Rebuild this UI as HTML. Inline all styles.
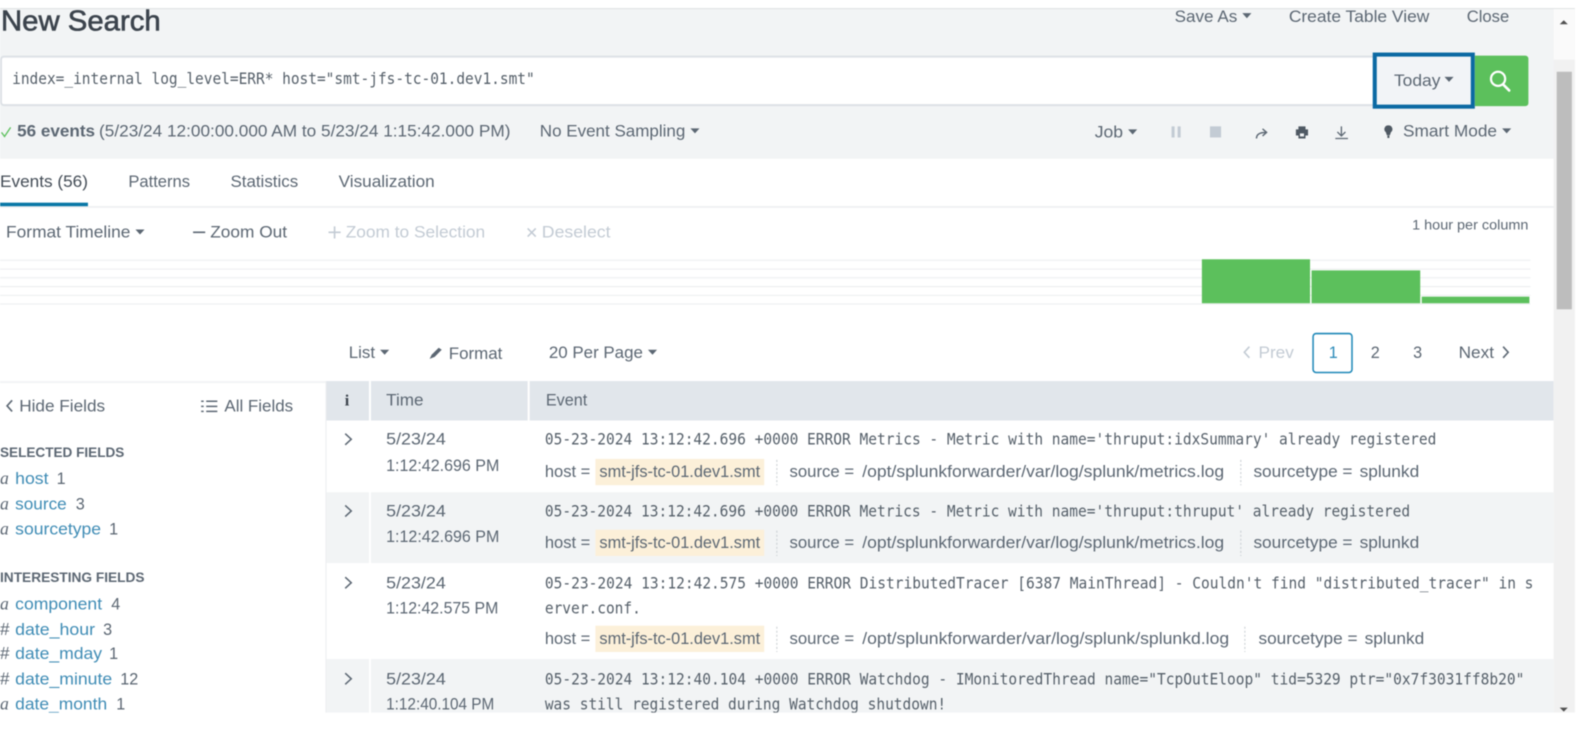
<!DOCTYPE html>
<html><head><meta charset="utf-8"><title>New Search</title>
<style>
html,body{margin:0;padding:0;background:#fff;width:1585px;height:748px;overflow:hidden}
svg{display:block;filter:blur(.5px)}
text{font-family:"Liberation Sans",sans-serif;font-size:16px;fill:#5c6773;white-space:pre}
.m{font-family:"DejaVu Sans Mono","Liberation Mono",monospace;font-size:15.4px;fill:#56606a}
.d{fill:#c3cbd4}
.l{fill:#3f8cb5}
.h{font-size:14px;font-weight:bold;fill:#5c6773}
.a{font-family:"Liberation Serif",serif;font-style:italic;font-size:17.500px;fill:#5c6773}
.n{font-size:17px}
</style></head><body>
<svg width="1585" height="748" viewBox="0 0 1568 740" preserveAspectRatio="none" xmlns="http://www.w3.org/2000/svg">
<rect width="1568" height="740" fill="#fff"/>
<!-- header -->
<rect x="0" y="8" width="1538" height="149" fill="#f2f4f5"/>
<rect x="0" y="8" width="1558" height="1" fill="#dfe1e3"/>
<text x="1" y="30" textLength="158" lengthAdjust="spacingAndGlyphs" style="font-size:28px;fill:#3c444d;stroke:#3c444d;stroke-width:.6">New Search</text>
<text x="1162" y="22" textLength="62" lengthAdjust="spacingAndGlyphs">Save As</text>
<path d="M1229 13h9l-4.500 5z" fill="#5c6773"/>
<text x="1275" y="22" textLength="139" lengthAdjust="spacingAndGlyphs">Create Table View</text>
<text x="1451" y="22" textLength="42" lengthAdjust="spacingAndGlyphs">Close</text>
<!-- search -->
<rect x="1" y="56" width="1360" height="48" rx="3" fill="#fff" stroke="#dde1e6" stroke-width="2"/>
<text class="m" x="12" y="83" textLength="517" lengthAdjust="spacingAndGlyphs">index=_internal log_level=ERR* host="smt-jfs-tc-01.dev1.smt"</text>
<rect x="1360" y="54" width="97" height="51.500" fill="#f2f4f7" stroke="#0b69a3" stroke-width="4"/>
<text x="1379" y="85" textLength="46" lengthAdjust="spacingAndGlyphs">Today</text>
<path d="M1429 76h9l-4.500 5z" fill="#5c6773"/>
<path d="M1459 55h50a3 3 0 0 1 3 3v44a3 3 0 0 1-3 3h-50z" fill="#5cc05c"/>
<circle cx="1482" cy="78" r="7" fill="none" stroke="#fff" stroke-width="2.200"/>
<path d="M1487 83.500l6 6" stroke="#fff" stroke-width="2.600" stroke-linecap="round"/>
<!-- status -->
<path d="M1.500 131l3 4 6-9" fill="none" stroke="#5cc05c" stroke-width="1.300"/>
<text x="17" y="135" textLength="77" lengthAdjust="spacingAndGlyphs" style="font-weight:bold">56 events</text>
<text x="98" y="135" textLength="407" lengthAdjust="spacingAndGlyphs">(5/23/24 12:00:00.000 AM to 5/23/24 1:15:42.000 PM)</text>
<text x="534" y="135" textLength="144" lengthAdjust="spacingAndGlyphs">No Event Sampling</text>
<path d="M683 127h9l-4.500 5z" fill="#5c6773"/>
<text x="1083" y="136" textLength="28" lengthAdjust="spacingAndGlyphs">Job</text>
<path d="M1116 128h9l-4.500 5z" fill="#5c6773"/>
<path d="M1159 125h3v11h-3zM1165 125h3v11h-3z" fill="#c3cbd4"/>
<rect x="1197" y="125" width="11" height="11" fill="#c3cbd4"/>
<path d="M1243 137c0-4 3-6 9-6M1249 127.500l4 3.500-4 3.500" fill="none" stroke="#5c6773" stroke-width="1.400"/>
<path d="M1284.500 125h7v3h2.500v6h-2.500v3h-7v-3h-2.500v-6h2.500z" fill="#4f5963"/>
<rect x="1286" y="132" width="4" height="3" fill="#f2f4f5"/>
<path d="M1327 125v9M1323 130.500l4 4 4-4M1321 137h12.500" fill="none" stroke="#5c6773" stroke-width="1.300"/>
<path d="M1373.500 124a3.800 3.800 0 0 1 2.500 6.800l-1 3h-3l-1-3a3.800 3.800 0 0 1 2.500-6.800z M1372.500 134h2v2.500h-2z" fill="#4f5963"/>
<text x="1388" y="135" textLength="93" lengthAdjust="spacingAndGlyphs">Smart Mode</text>
<path d="M1486 127h9l-4.500 5z" fill="#5c6773"/>
<!-- tabs -->
<text x="0" y="185" textLength="87" lengthAdjust="spacingAndGlyphs" style="fill:#444d57">Events (56)</text>
<text x="127" y="185" textLength="61" lengthAdjust="spacingAndGlyphs">Patterns</text>
<text x="228" y="185" textLength="67" lengthAdjust="spacingAndGlyphs">Statistics</text>
<text x="335" y="185" textLength="95" lengthAdjust="spacingAndGlyphs">Visualization</text>
<rect x="0" y="204" width="1538" height="1.500" fill="#eceef0"/>
<rect x="0" y="200.500" width="87" height="3.500" fill="#0877a6"/>
<!-- timeline controls -->
<text x="6" y="235" textLength="123" lengthAdjust="spacingAndGlyphs">Format Timeline</text>
<path d="M134 227h9l-4.500 5z" fill="#5c6773"/>
<rect x="191" y="229" width="12" height="1.600" fill="#5c6773"/>
<text x="208" y="235" textLength="76" lengthAdjust="spacingAndGlyphs">Zoom Out</text>
<path d="M325 229.800h12M331 224v12" stroke="#c3cbd4" stroke-width="1.600"/>
<text class="d" x="342" y="235" textLength="138" lengthAdjust="spacingAndGlyphs">Zoom to Selection</text>
<path d="M522 226l8 8M530 226l-8 8" stroke="#c3cbd4" stroke-width="1.500"/>
<text class="d" x="536" y="235" textLength="68" lengthAdjust="spacingAndGlyphs">Deselect</text>
<text x="1397" y="227" textLength="115" lengthAdjust="spacingAndGlyphs" style="font-size:13.500px">1 hour per column</text>
<!-- chart -->
<path d="M0 257.500h1514M0 266.200h1514M0 274.800h1514M0 283.500h1514M0 292.200h1514M0 300.800h1514" stroke="#eceeef" stroke-width="1"/>
<rect x="1189" y="256.500" width="107" height="43.500" fill="#5cc05c"/>
<rect x="1297.500" y="267.500" width="107.500" height="32.500" fill="#5cc05c"/>
<rect x="1406.500" y="293.500" width="106.500" height="6.500" fill="#5cc05c"/>
<!-- results toolbar -->
<text x="345" y="354" textLength="26" lengthAdjust="spacingAndGlyphs">List</text>
<path d="M376 346h9l-4.500 5z" fill="#5c6773"/>
<path d="M425 355l2-4 7-7 3 2-7 7z" fill="#5c6773"/>
<text x="444" y="355" textLength="53" lengthAdjust="spacingAndGlyphs">Format</text>
<text x="543" y="354" textLength="93" lengthAdjust="spacingAndGlyphs">20 Per Page</text>
<path d="M641 346h9l-4.500 5z" fill="#5c6773"/>
<path d="M1236 343l-5 5.500 5 5.500" fill="none" stroke="#c3cbd4" stroke-width="1.600"/>
<text class="d" x="1245" y="354" textLength="35" lengthAdjust="spacingAndGlyphs">Prev</text>
<rect x="1299" y="330" width="38.500" height="38.500" rx="3" fill="#fff" stroke="#1e88b8" stroke-width="1.500"/>
<text x="1314.500" y="354" style="fill:#2a8ab8">1</text>
<text x="1356" y="354">2</text>
<text x="1398" y="354">3</text>
<text x="1443" y="354" textLength="35" lengthAdjust="spacingAndGlyphs">Next</text>
<path d="M1487 343l5 5.500-5 5.500" fill="none" stroke="#5c6773" stroke-width="1.600"/>
<!-- sidebar -->
<rect x="0" y="377" width="322" height="2" fill="#f2f4f5"/>
<path d="M12 396l-5 5.500 5 5.500" fill="none" stroke="#5c6773" stroke-width="1.600"/>
<text x="19" y="407" textLength="85" lengthAdjust="spacingAndGlyphs">Hide Fields</text>
<path d="M204 397h11M204 402h11M204 407h11" stroke="#5c6773" stroke-width="1.500"/>
<path d="M199 397h2.500M199 402h2.500M199 407h2.500" stroke="#5c6773" stroke-width="1.500"/>
<text x="222" y="407" textLength="68" lengthAdjust="spacingAndGlyphs">All Fields</text>
<text class="h" x="0" y="452" textLength="123" lengthAdjust="spacingAndGlyphs">SELECTED FIELDS</text>
<text class="a" x="0" y="479">a</text><text class="l" x="15" y="479" textLength="33" lengthAdjust="spacingAndGlyphs">host</text><text x="56" y="479">1</text>
<text class="a" x="0" y="504">a</text><text class="l" x="15" y="504" textLength="51" lengthAdjust="spacingAndGlyphs">source</text><text x="75" y="504">3</text>
<text class="a" x="0" y="529">a</text><text class="l" x="15" y="529" textLength="85" lengthAdjust="spacingAndGlyphs">sourcetype</text><text x="108" y="529">1</text>
<text class="h" x="0" y="576" textLength="143" lengthAdjust="spacingAndGlyphs">INTERESTING FIELDS</text>
<text class="a" x="0" y="603">a</text><text class="l" x="15" y="603" textLength="86" lengthAdjust="spacingAndGlyphs">component</text><text x="110" y="603">4</text>
<text class="n" x="0" y="628">#</text><text class="l" x="15" y="628" textLength="79" lengthAdjust="spacingAndGlyphs">date_hour</text><text x="102" y="628">3</text>
<text class="n" x="0" y="652">#</text><text class="l" x="15" y="652" textLength="86" lengthAdjust="spacingAndGlyphs">date_mday</text><text x="108" y="652">1</text>
<text class="n" x="0" y="677">#</text><text class="l" x="15" y="677" textLength="96" lengthAdjust="spacingAndGlyphs">date_minute</text><text x="119" y="677">12</text>
<text class="a" x="0" y="702">a</text><text class="l" x="15" y="702" textLength="91" lengthAdjust="spacingAndGlyphs">date_month</text><text x="115" y="702">1</text>
<!-- table -->
<rect x="322" y="377" width="1215" height="39" fill="#e1e6eb"/>
<rect x="322" y="487" width="1215" height="70" fill="#f2f4f5"/>
<rect x="322" y="652" width="1215" height="60" fill="#f2f4f5"/>
<rect x="322" y="377" width="1" height="335" fill="#eceef0"/>
<rect x="365" y="377" width="2" height="335" fill="#fff"/>
<rect x="522" y="377" width="2" height="39" fill="#fff"/>
<text x="341" y="401" style="font-family:'Liberation Serif',serif;font-weight:bold;font-size:16px;fill:#3c444d">i</text>
<text x="382" y="401" textLength="37" lengthAdjust="spacingAndGlyphs">Time</text>
<text x="540" y="401" textLength="41" lengthAdjust="spacingAndGlyphs">Event</text>
<g fill="none" stroke="#5c6773" stroke-width="1.500">
<path d="M341.500 429l6 5.500-6 5.500"/><path d="M341.500 500l6 5.500-6 5.500"/><path d="M341.500 571l6 5.500-6 5.500"/><path d="M341.500 666l6 5.500-6 5.500"/>
</g>
<text x="382" y="440" textLength="59" lengthAdjust="spacingAndGlyphs">5/23/24</text><text x="382" y="466" textLength="112" lengthAdjust="spacingAndGlyphs">1:12:42.696 PM</text>
<text x="382" y="511" textLength="59" lengthAdjust="spacingAndGlyphs">5/23/24</text><text x="382" y="536" textLength="112" lengthAdjust="spacingAndGlyphs">1:12:42.696 PM</text>
<text x="382" y="582" textLength="59" lengthAdjust="spacingAndGlyphs">5/23/24</text><text x="382" y="607" textLength="111" lengthAdjust="spacingAndGlyphs">1:12:42.575 PM</text>
<text x="382" y="677" textLength="59" lengthAdjust="spacingAndGlyphs">5/23/24</text><text x="382" y="702" textLength="107" lengthAdjust="spacingAndGlyphs">1:12:40.104 PM</text>
<text class="m" x="539" y="440" textLength="882" lengthAdjust="spacingAndGlyphs">05-23-2024 13:12:42.696 +0000 ERROR Metrics - Metric with name='thruput:idxSummary' already registered</text>
<text class="m" x="539" y="511" textLength="856" lengthAdjust="spacingAndGlyphs">05-23-2024 13:12:42.696 +0000 ERROR Metrics - Metric with name='thruput:thruput' already registered</text>
<text class="m" x="539" y="582" textLength="978" lengthAdjust="spacingAndGlyphs">05-23-2024 13:12:42.575 +0000 ERROR DistributedTracer [6387 MainThread] - Couldn't find "distributed_tracer" in s</text>
<text class="m" x="539" y="607" textLength="95" lengthAdjust="spacingAndGlyphs">erver.conf.</text>
<text class="m" x="539" y="677" textLength="969" lengthAdjust="spacingAndGlyphs">05-23-2024 13:12:40.104 +0000 ERROR Watchdog - IMonitoredThread name="TcpOutEloop" tid=5329 ptr="0x7f3031ff8b20"</text>
<text class="m" x="539" y="702" textLength="397" lengthAdjust="spacingAndGlyphs">was still registered during Watchdog shutdown!</text>
<!-- meta row 1 -->
<text x="539" y="472" textLength="45" lengthAdjust="spacingAndGlyphs">host =</text>
<rect x="589" y="454" width="167" height="26" fill="#fcf0d9"/>
<text x="593" y="472" textLength="159" lengthAdjust="spacingAndGlyphs">smt-jfs-tc-01.dev1.smt</text>
<path d="M768.500 455v25" stroke="#c8cdd2" stroke-dasharray="2 2"/>
<text x="781" y="472" textLength="64" lengthAdjust="spacingAndGlyphs">source =</text>
<text x="853" y="472" textLength="358" lengthAdjust="spacingAndGlyphs">/opt/splunkforwarder/var/log/splunk/metrics.log</text>
<path d="M1227.500 455v25" stroke="#c8cdd2" stroke-dasharray="2 2"/>
<text x="1240" y="472" textLength="98" lengthAdjust="spacingAndGlyphs">sourcetype =</text>
<text x="1345" y="472" textLength="59" lengthAdjust="spacingAndGlyphs">splunkd</text>
<!-- meta row 2 -->
<text x="539" y="542" textLength="45" lengthAdjust="spacingAndGlyphs">host =</text>
<rect x="589" y="524" width="167" height="26" fill="#fcf0d9"/>
<text x="593" y="542" textLength="159" lengthAdjust="spacingAndGlyphs">smt-jfs-tc-01.dev1.smt</text>
<path d="M768.500 525v25" stroke="#c8cdd2" stroke-dasharray="2 2"/>
<text x="781" y="542" textLength="64" lengthAdjust="spacingAndGlyphs">source =</text>
<text x="853" y="542" textLength="358" lengthAdjust="spacingAndGlyphs">/opt/splunkforwarder/var/log/splunk/metrics.log</text>
<path d="M1227.500 525v25" stroke="#c8cdd2" stroke-dasharray="2 2"/>
<text x="1240" y="542" textLength="98" lengthAdjust="spacingAndGlyphs">sourcetype =</text>
<text x="1345" y="542" textLength="59" lengthAdjust="spacingAndGlyphs">splunkd</text>
<!-- meta row 3 -->
<text x="539" y="637" textLength="45" lengthAdjust="spacingAndGlyphs">host =</text>
<rect x="589" y="619" width="167" height="26" fill="#fcf0d9"/>
<text x="593" y="637" textLength="159" lengthAdjust="spacingAndGlyphs">smt-jfs-tc-01.dev1.smt</text>
<path d="M768.500 620v25" stroke="#c8cdd2" stroke-dasharray="2 2"/>
<text x="781" y="637" textLength="64" lengthAdjust="spacingAndGlyphs">source =</text>
<text x="853" y="637" textLength="363" lengthAdjust="spacingAndGlyphs">/opt/splunkforwarder/var/log/splunk/splunkd.log</text>
<path d="M1231.500 620v25" stroke="#c8cdd2" stroke-dasharray="2 2"/>
<text x="1245" y="637" textLength="98" lengthAdjust="spacingAndGlyphs">sourcetype =</text>
<text x="1350" y="637" textLength="59" lengthAdjust="spacingAndGlyphs">splunkd</text>
<!-- scrollbar -->
<rect x="1537" y="9" width="21" height="696" fill="#f1f1f1"/>
<rect x="1537" y="9" width="21" height="50" fill="#fafafa"/>
<rect x="1540" y="71" width="15" height="235" fill="#bdbdbd"/>
<path d="M1543 24h8l-4-4z" fill="#505050"/>
<path d="M1543 700h8l-4 4z" fill="#505050"/>
<!-- bottom clip -->
<rect x="0" y="705" width="1568" height="35" fill="#fff"/>
</svg>
</body></html>
